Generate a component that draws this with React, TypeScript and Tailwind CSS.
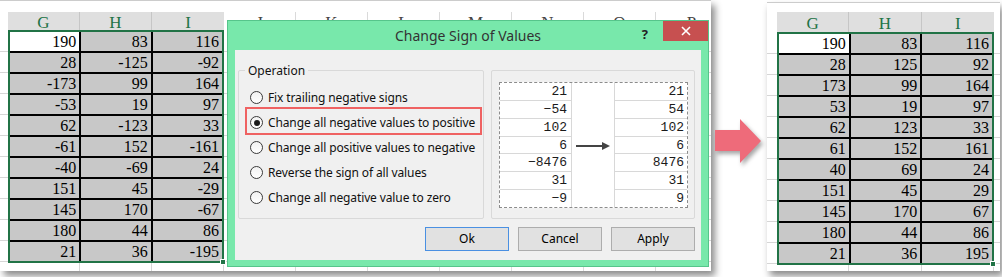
import React from "react";

const before = [
  [190, 83, 116],
  [28, -125, -92],
  [-173, 99, 164],
  [-53, 19, 97],
  [62, -123, 33],
  [-61, 152, -161],
  [-40, -69, 24],
  [151, 45, -29],
  [145, 170, -67],
  [180, 44, 86],
  [21, 36, -195],
];
const after = before.map((row) => row.map((v) => Math.abs(v)));

const previewIn = ["21", "−54", "102", "6", "−8476", "31", "−9"];
const previewOut = ["21", "54", "102", "6", "8476", "31", "9"];

const options = [
  "Fix trailing negative signs",
  "Change all negative values to positive",
  "Change all positive values to negative",
  "Reverse the sign of all values",
  "Change all negative value to zero",
];

const rows = Array.from({ length: 12 }, (_, i) => i);

interface SheetProps {
  data: number[][];
  stripW: string;
  headH: string;
  rangeW: string;
  extra: string[];
}

function Sheet({ data, stripW, headH, rangeW, extra }: SheetProps) {
  return (
    <div className="flex flex-col font-['Liberation_Serif','Times_New_Roman',serif]">
      {/* column headers */}
      <div className={`flex ${headH}`}>
        <div className={`${stripW} shrink-0`} />
        <div className={`${rangeW} grid shrink-0 grid-cols-3 bg-[#dfdfdf]`}>
          {["G", "H", "I"].map((c, i) => (
            <div
              key={c}
              className={`flex items-center justify-center pt-[2px] text-[17px] leading-none text-[#217346] ${
                i < 2 ? "border-r border-[#c6c6c6]" : ""
              }`}
            >
              {c}
            </div>
          ))}
        </div>
        <div className="flex min-w-0 flex-1 overflow-hidden">
          {extra.map((c, i) => (
            <div
              key={i}
              className="flex w-[72px] shrink-0 items-center justify-center border-r border-[#dadada] pt-[2px] text-[17px] leading-none text-[#444]"
            >
              {c}
            </div>
          ))}
        </div>
      </div>

      {/* body */}
      <div className="flex">
        <div className={`${stripW} shrink-0`}>
          {rows.map((r) => (
            <div
              key={r}
              className={`${r === 0 ? "h-[22px]" : "h-[21px]"} border-b border-[#d6d6d6]`}
            />
          ))}
        </div>

        <div className={`${rangeW} shrink-0`}>
          <div className="relative border-2 border-[#217346]">
            <div className="grid grid-cols-3 gap-[2px] bg-black">
              {data.flat().map((v, i) => (
                <div
                  key={i}
                  className={`h-[19px] pr-[3px] text-right text-[16px] leading-[20px] text-black ${
                    i === 0 ? "bg-white" : "bg-[#c8c8c8]"
                  }`}
                >
                  {v}
                </div>
              ))}
            </div>
            <div className="absolute -bottom-[4px] -right-[4px] h-[6px] w-[6px] border border-white bg-[#217346]" />
          </div>
          <div className="grid h-[21px] grid-cols-3">
            <div className="border-r border-[#d6d6d6]" />
            <div className="border-r border-[#d6d6d6]" />
            <div className="border-r border-[#d6d6d6]" />
          </div>
        </div>

        <div className="min-w-0 flex-1 overflow-hidden">
          {rows.map((r) => (
            <div
              key={r}
              className={`flex ${r === 0 ? "h-[22px]" : "h-[21px]"} border-b border-[#d6d6d6]`}
            >
              {extra.map((_, c) => (
                <div key={c} className="w-[72px] shrink-0 border-r border-[#dadada]" />
              ))}
            </div>
          ))}
        </div>
      </div>
    </div>
  );
}

function Radio({ checked }: { checked?: boolean }) {
  return (
    <span className="flex h-[13px] w-[13px] shrink-0 items-center justify-center rounded-full border border-[#3a3a3a] bg-gradient-to-b from-[#f2f2f2] to-white">
      {checked && <span className="h-[6px] w-[6px] rounded-full bg-[#1a1a1a]" />}
    </span>
  );
}

function Dialog() {
  return (
    <div className="absolute left-[227px] top-[19px] flex h-[247px] w-[482px] flex-col border border-[#56c58b] bg-[#78e8ab] px-[7px] pb-[6px] font-['Noto_Sans','Open_Sans',sans-serif] leading-none">
      {/* title bar */}
      <div className="relative flex h-[29px] shrink-0 items-center justify-center">
        <span className="text-[14px] text-[#333]">Change Sign of Values</span>
        <span className="absolute right-[53px] top-[7px] text-[13px] font-bold text-[#222]">?</span>
        <div className="absolute -right-[7px] top-0 flex h-[20px] w-[45px] items-center justify-center bg-[#c75050]">
          <svg width="10" height="10" viewBox="0 0 10 10">
            <path d="M1 1 L9 9 M9 1 L1 9" stroke="#fff" strokeWidth="1.6" />
          </svg>
        </div>
      </div>

      {/* client area */}
      <div className="flex flex-1 flex-col bg-[#f0f0f0] px-[3px] pt-[20px] text-[12px] text-[#111]">
        <div className="flex h-[149px] shrink-0 gap-[7px] pr-[3px]">
          {/* operation group */}
          <div className="relative w-[246px] shrink-0 rounded-[2px] border border-[#d9d9d9]">
            <span className="absolute -top-[8px] left-[6px] bg-[#f0f0f0] px-[3px] leading-[16px]">Operation</span>
            <div className="flex flex-col pl-[11px] pt-[14px]">
              {options.map((o, i) => (
                <div key={o} className="flex h-[25px] items-center gap-[5px]">
                  <Radio checked={i === 1} />
                  <span className="whitespace-nowrap tracking-[-0.12px]">{o}</span>
                </div>
              ))}
            </div>
            <div className="absolute left-[6px] top-[36px] h-[28px] w-[237px] border-2 border-[#ef6262]" />
          </div>

          {/* preview group */}
          <div className="flex-1 rounded-[2px] border border-[#d9d9d9] pb-[10px] pl-[7px] pr-[6px] pt-[11px]">
            <div className="flex h-full border border-dashed border-[#8c8c8c] bg-white font-['Liberation_Mono','Courier_New',monospace] text-[13px] leading-none text-[#1a1a1a]">
              <div className="flex w-[72px] flex-col border-r border-[#d8d8d8]">
                {previewIn.map((v, i) => (
                  <div
                    key={i}
                    className={`flex flex-1 items-center justify-end pr-[4px] ${
                      i < 6 ? "border-b border-[#d8d8d8]" : ""
                    }`}
                  >
                    {v}
                  </div>
                ))}
              </div>
              <div className="flex w-[43px] flex-col justify-center border-r border-[#d8d8d8] pl-[4px]">
                <svg width="35" height="10" viewBox="0 0 35 10" className="mt-[2px]">
                  <path d="M0 5 H27" stroke="#444" strokeWidth="2" />
                  <path d="M26 1 L34 5 L26 9 Z" fill="#444" />
                </svg>
              </div>
              <div className="flex flex-1 flex-col">
                {previewOut.map((v, i) => (
                  <div
                    key={i}
                    className={`flex flex-1 items-center justify-end pr-[3px] ${
                      i < 6 ? "border-b border-[#d8d8d8]" : ""
                    }`}
                  >
                    {v}
                  </div>
                ))}
              </div>
            </div>
          </div>
        </div>

        {/* buttons */}
        <div className="mt-[8px] flex justify-end gap-[9px] pr-[3px]">
          {["Ok", "Cancel", "Apply"].map((b) => (
            <button
              key={b}
              className={`h-[24px] w-[84px] border bg-[#e1e1e1] text-[12px] text-black ${
                b === "Ok" ? "border-[#4a90e2]" : "border-[#adadad]"
              }`}
            >
              {b}
            </button>
          ))}
        </div>
      </div>
    </div>
  );
}

export default function App() {
  return (
    <div className="flex h-[277px] w-[1002px] overflow-hidden bg-white">
      <div className="relative h-[271px] w-[711px] shrink-0 overflow-hidden border-t border-[#cccccc] bg-white pt-[11px] shadow-[4px_5px_7px_rgba(0,0,0,0.45)]">
        <Sheet
          data={before}
          stripW="w-[8px]"
          headH="h-[18px]"
          rangeW="w-[216px]"
          extra={["J", "K", "L", "M", "N", "O", "P"]}
        />
        <Dialog />
      </div>

      <div className="w-[56px] shrink-0 pl-[4px] pt-[117px]">
        <svg
          width="48"
          height="48"
          viewBox="0 0 48 48"
          className="drop-shadow-[2px_3px_2px_rgba(0,0,0,0.35)]"
        >
          <path d="M0 13 H25 V2 L46 24 L25 46 V34 H0 Z" fill="#ee6b7a" />
        </svg>
      </div>

      <div className="mt-[2px] h-[269px] w-[233px] shrink-0 overflow-hidden border-t border-[#cccccc] bg-white pt-[9px] shadow-[3px_5px_7px_rgba(0,0,0,0.45)]">
        <Sheet
          data={after}
          stripW="w-[10px]"
          headH="h-[20px]"
          rangeW="w-[217px]"
          extra={[""]}
        />
      </div>
    </div>
  );
}
